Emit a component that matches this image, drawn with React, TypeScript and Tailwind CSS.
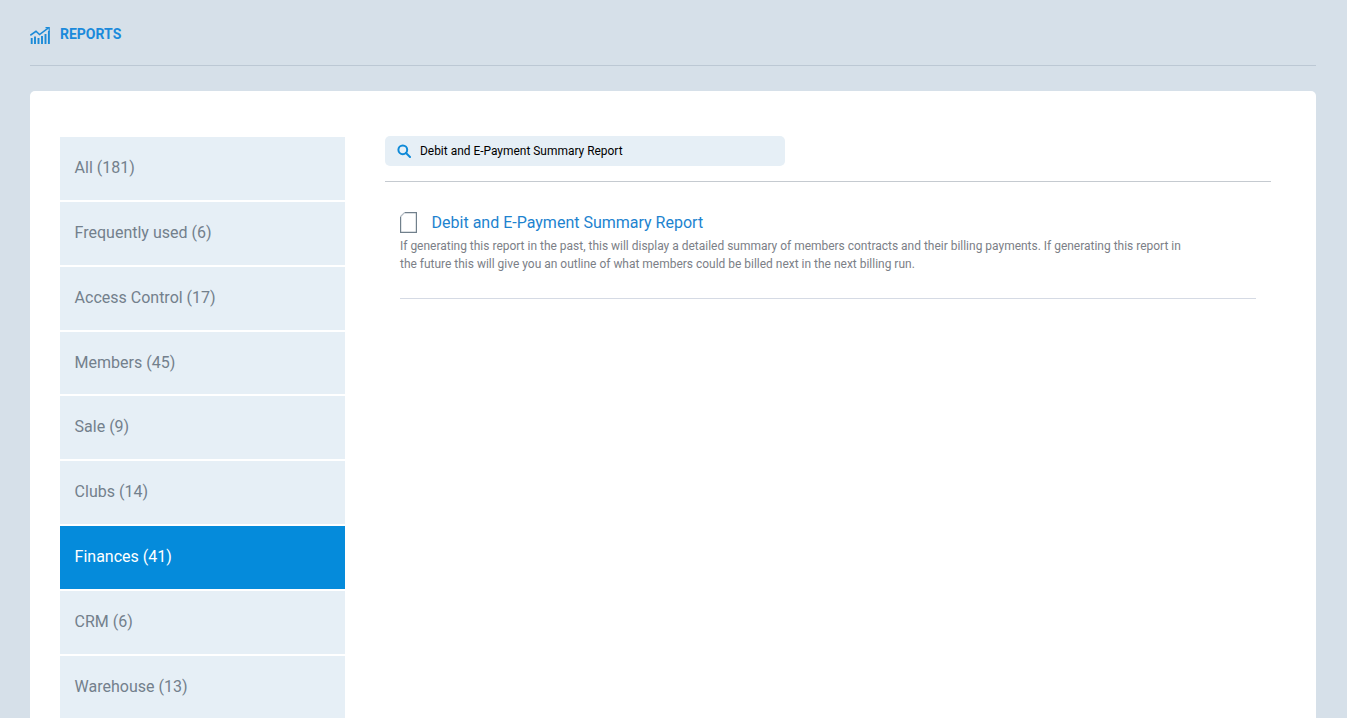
import React from "react";

const cats = [
  ["All (181)", false],
  ["Frequently used (6)", false],
  ["Access Control (17)", false],
  ["Members (45)", false],
  ["Sale (9)", false],
  ["Clubs (14)", false],
  ["Finances (41)", true],
  ["CRM (6)", false],
  ["Warehouse (13)", false],
] as const;

export default function App() {
  return (
    <div className="h-[718px] overflow-hidden bg-[#d6e0e9] pl-[30px] pr-[31px] font-['Roboto',sans-serif]">
      <header className="flex h-[66px] items-center gap-[10px] border-b border-[#bcc8d4] pt-[3px]">
        <svg width="20" height="17" viewBox="0 0 20 17" fill="none" stroke="#1a8ad8" className="mt-[3px]">
          <path d="M0.3 8.3 L6 4.3 L9.5 7.5 L18.5 0.8" strokeWidth="1.5" />
          <path d="M15.5 0.6 H19.2 V4.5" strokeWidth="1.2" />
          <path d="M1.7 11 V17 M5 9.5 V17 M8.5 11 V17 M12 9 V17 M15.5 7 V17 M18.9 4 V17" strokeWidth="1.9" />
        </svg>
        <span className="text-[14px] font-bold text-[#1b8adb]">REPORTS</span>
      </header>
      <main className="mt-[25px] flex h-[700px] rounded-t-[5px] bg-white pl-[30px] pr-[45px] pt-[46px]">
        <nav className="flex w-[285px] shrink-0 flex-col gap-[2px]">
          {cats.map(([label, active]) => (
            <div
              key={label}
              className={
                active
                  ? "flex h-[62.85px] shrink-0 items-center bg-[#058bdb] pb-[0.85px] pl-[14.6px] text-[16px] text-white"
                  : "flex h-[62.85px] shrink-0 items-center bg-[#e6eff6] pb-[0.85px] pl-[14.6px] text-[16px] text-[#73808c]"
              }
            >
              {label}
            </div>
          ))}
        </nav>
        <section className="ml-[40px] flex-1">
          <div className="-mt-[1px] flex h-[30px] w-[400px] items-center rounded-[5px] bg-[#e6eff6] pl-[12px]">
            <svg width="14" height="14" viewBox="0 0 14 14" fill="none" stroke="#0f8ad8" strokeWidth="2">
              <circle cx="5.8" cy="5.8" r="4.4" />
              <path d="M9 9 L13 13" strokeLinecap="round" />
            </svg>
            <span className="ml-[9px] mt-[1px] text-[11.95px] text-black">Debit and E-Payment Summary Report</span>
          </div>
          <div className="mt-[15px] border-t border-[#c5cad0] px-[15px] pt-[30px]">
            <div className="border-b border-[#d5dae4] pb-[25px]">
              <div className="flex items-center">
                <svg width="17" height="21" viewBox="0 0 17 21" fill="none" strokeWidth="1.2">
                  <path d="M4.5 0.6 H16.4 V20.4 H0.6 V4.5" stroke="#71808c" />
                  <path d="M0.6 4.5 L4.5 0.6" stroke="#b4bcc4" />
                </svg>
                <span className="ml-[14.6px] text-[16px] leading-[21px] text-[#1d83cf]">Debit and E-Payment Summary Report</span>
              </div>
              <p className="mt-[3.5px] w-[790px] text-[11.97px] leading-[18px] text-[#7c8087]">
                If generating this report in the past, this will display a detailed summary of members contracts and their billing payments. If generating this report in the future this will give you an outline of what members could be billed next in the next billing run.
              </p>
            </div>
          </div>
        </section>
      </main>
    </div>
  );
}
